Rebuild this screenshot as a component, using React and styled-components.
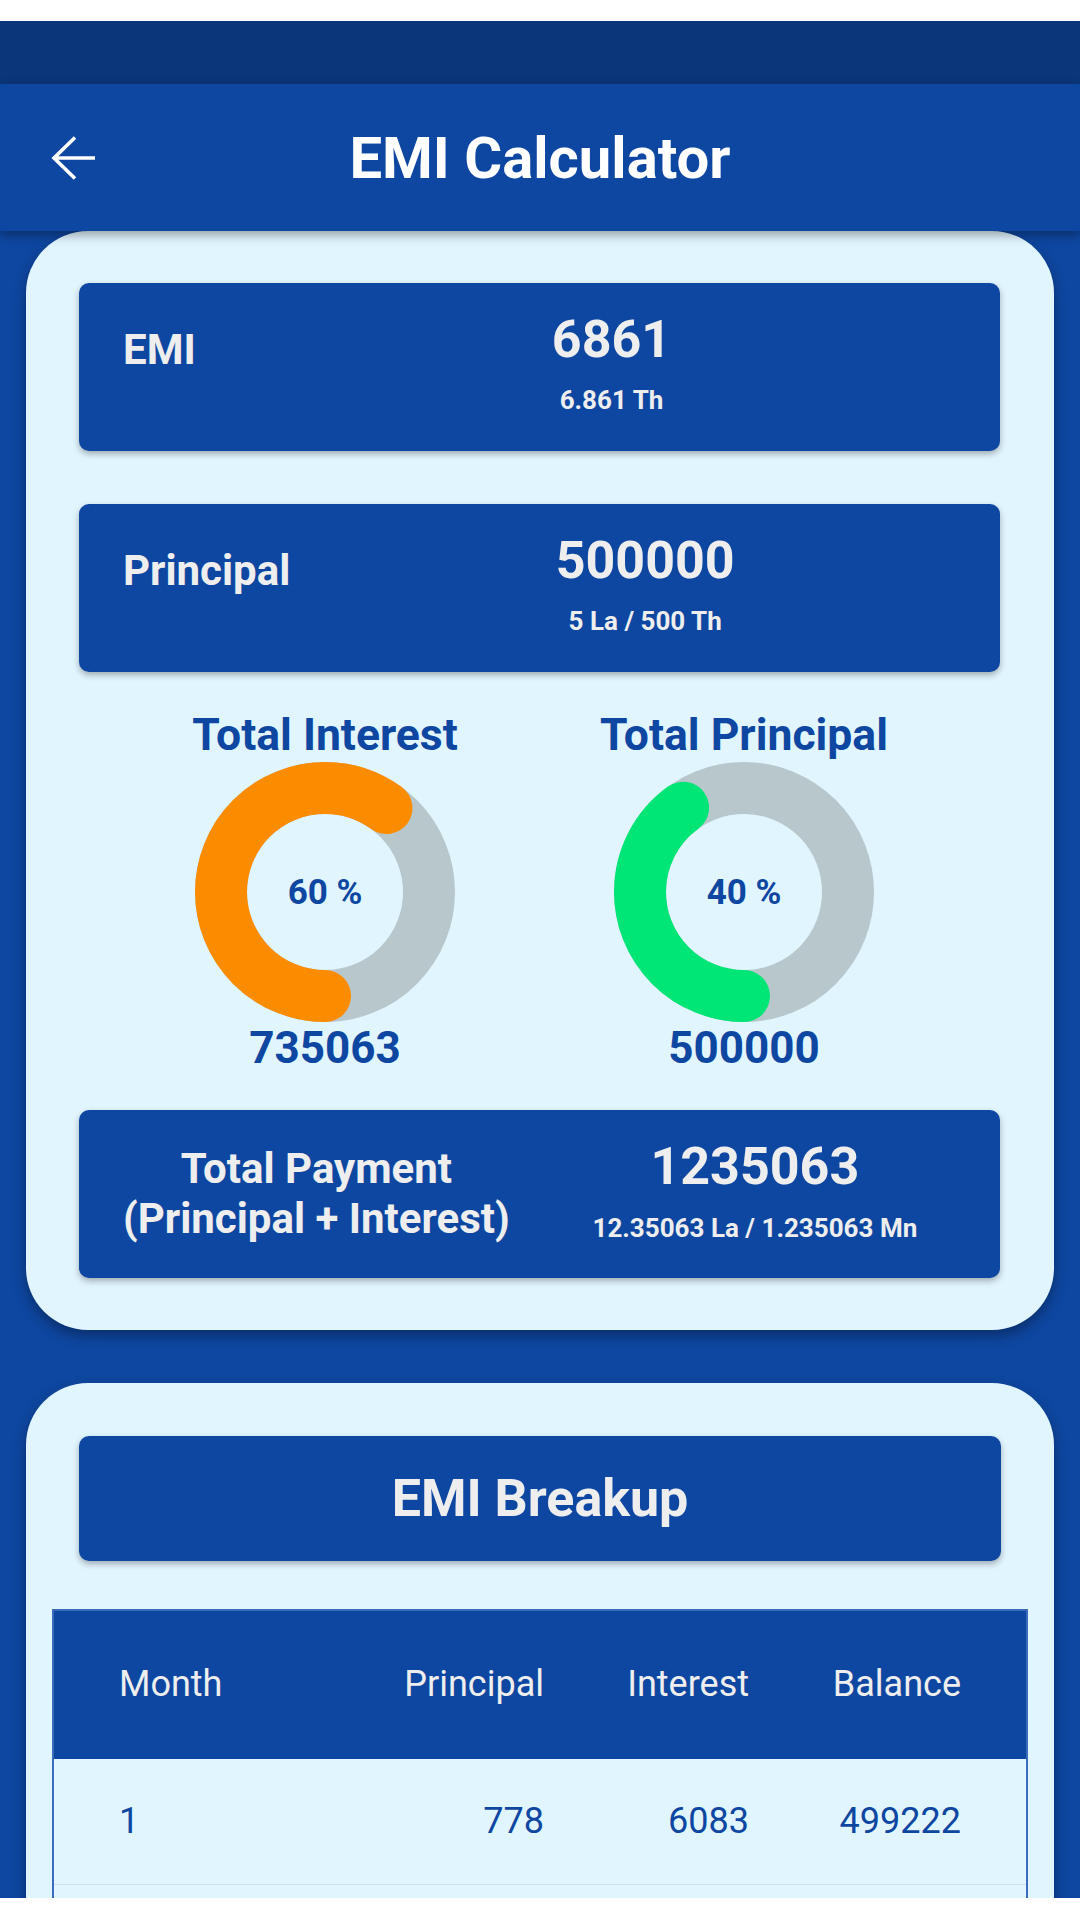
import React from "react";
import styled, { createGlobalStyle } from "styled-components";

const GlobalStyle = createGlobalStyle`
  html, body { margin: 0; padding: 0; }
  body { font-family: Roboto, "Noto Sans", "Liberation Sans", sans-serif; background: #ffffff; }
  * { box-sizing: border-box; }
`;

const BLUE = "#0e47a1";
const TEXT_BLUE = "#0d47a1";
const LIGHT = "#e1f5fe";
const SOFT_WHITE = "#eeeeee";

const Screen = styled.div`
  width: 1080px;
  height: 1920px;
  display: flex;
  flex-direction: column;
  overflow: hidden;
  background: ${BLUE};
`;

const TopStrip = styled.div`
  height: 21px;
  flex-shrink: 0;
  background: #ffffff;
`;

const StatusBar = styled.div`
  height: 63px;
  flex-shrink: 0;
  background: #0b3679;
`;

const AppBar = styled.header`
  height: 147px;
  flex-shrink: 0;
  display: grid;
  grid-template-columns: 1fr auto 1fr;
  align-items: center;
  background: ${BLUE};
  position: relative;
  z-index: 2;
  box-shadow: 0 4px 10px rgba(0, 0, 0, 0.35);
`;

const BackButton = styled.button`
  justify-self: start;
  margin-left: 51px;
  padding: 0;
  border: none;
  background: transparent;
  display: flex;
  align-items: center;
  cursor: pointer;
`;

const Title = styled.h1`
  margin: 0;
  font-size: 58px;
  font-weight: 700;
  line-height: 1;
  color: #ffffff;
  letter-spacing: 0;
`;

const Content = styled.main`
  flex: 1;
  overflow: hidden;
  padding: 0 26px;
  display: flex;
  flex-direction: column;
  gap: 53px;
`;

const BottomBar = styled.div`
  height: 22px;
  flex-shrink: 0;
  background: #ffffff;
`;

const Card = styled.section`
  flex-shrink: 0;
  background: ${LIGHT};
  border-radius: 62px;
  padding: ${(p) => p.$pad};
  display: flex;
  flex-direction: column;
  box-shadow: 0 6px 14px rgba(0, 0, 0, 0.35);
`;

const StatBox = styled.div`
  height: 168px;
  flex-shrink: 0;
  display: flex;
  align-items: flex-start;
  padding: 26px 0 0 44px;
  margin-bottom: ${(p) => p.$space || 0}px;
  background: ${BLUE};
  border-radius: 10px;
  box-shadow: 0 3px 6px rgba(0, 0, 0, 0.3);
  color: ${SOFT_WHITE};
`;

const StatLabel = styled.div`
  min-width: 100px;
  margin-top: ${(p) => p.$offset}px;
  font-size: 42px;
  font-weight: 700;
  line-height: 50px;
  text-align: ${(p) => (p.$center ? "center" : "left")};
  white-space: pre-line;
`;

const ValueCol = styled.div`
  flex: 1;
  display: flex;
  flex-direction: column;
  align-items: center;
`;

const MainValue = styled.div`
  font-size: 52px;
  font-weight: 700;
  line-height: 1.2;
`;

const SubValue = styled.div`
  margin-top: 14px;
  font-size: 26px;
  font-weight: 700;
  line-height: 1.2;
`;

const ChartRow = styled.div`
  display: flex;
  justify-content: center;
  gap: 119px;
  padding-right: 10px;
  margin: 37px 0 35px;
`;

const ChartCol = styled.div`
  width: 300px;
  display: flex;
  flex-direction: column;
  align-items: center;
  color: ${TEXT_BLUE};
`;

const ChartTitle = styled.div`
  font-size: 44.5px;
  font-weight: 700;
  line-height: 1.2;
  white-space: nowrap;
`;

const Donut = styled.div`
  width: 260px;
  height: 260px;
  display: grid;
  place-items: center;
  & > * {
    grid-area: 1 / 1;
  }
`;

const Percent = styled.div`
  font-size: 35px;
  font-weight: 700;
  line-height: 1;
`;

const ChartValue = styled.div`
  font-size: 44px;
  font-weight: 700;
  line-height: 1.2;
`;

const BreakupHeader = styled.div`
  height: 125px;
  margin: 0 27px;
  display: flex;
  align-items: center;
  justify-content: center;
  background: ${BLUE};
  border-radius: 10px;
  box-shadow: 0 3px 6px rgba(0, 0, 0, 0.3);
  color: ${SOFT_WHITE};
  font-size: 52px;
  font-weight: 700;
`;

const Table = styled.div`
  margin-top: 48px;
  border: 2px solid #3a6cbb;
  border-bottom: none;
`;

const Row = styled.div`
  display: grid;
  grid-template-columns: 284px 141px 205px 212px;
  padding: 0 65px;
  align-items: center;
  height: ${(p) => (p.$head ? 148 : 126)}px;
  background: ${(p) => (p.$head ? BLUE : LIGHT)};
  color: ${(p) => (p.$head ? SOFT_WHITE : TEXT_BLUE)};
  border-bottom: 1px solid ${(p) => (p.$head ? BLUE : "#cfe0ea")};
  font-size: 36px;
  font-weight: 400;
  line-height: 1.2;
`;

const Cell = styled.div`
  text-align: ${(p) => (p.$num ? "right" : "left")};
  white-space: nowrap;
`;

function BackArrow() {
  return (
    <svg width="46" height="46" viewBox="0 0 46 46" fill="none">
      <path
        d="M3 23 H44 M24 2.5 L3 23 L24 43.5"
        stroke="#ffffff"
        strokeWidth="3.6"
        strokeLinejoin="miter"
      />
    </svg>
  );
}

function Ring({ percent, color }) {
  const r = 104;
  const c = 2 * Math.PI * r;
  const len = (percent / 100) * c;
  return (
    <svg width="260" height="260" viewBox="0 0 260 260">
      <circle cx="130" cy="130" r={r} fill="none" stroke="#b8c7cc" strokeWidth="52" />
      <circle
        cx="130"
        cy="130"
        r={r}
        fill="none"
        stroke={color}
        strokeWidth="52"
        strokeLinecap="round"
        strokeDasharray={`${len} ${c}`}
        transform="rotate(90 130 130)"
      />
    </svg>
  );
}

function Stat({ label, value, sub, offset = 16, space, center }) {
  return (
    <StatBox $space={space}>
      <StatLabel $offset={offset} $center={center}>
        {label}
      </StatLabel>
      <ValueCol>
        <MainValue>{value}</MainValue>
        <SubValue>{sub}</SubValue>
      </ValueCol>
    </StatBox>
  );
}

function Chart({ title, percent, color, value }) {
  return (
    <ChartCol>
      <ChartTitle>{title}</ChartTitle>
      <Donut>
        <Ring percent={percent} color={color} />
        <Percent>{percent} %</Percent>
      </Donut>
      <ChartValue>{value}</ChartValue>
    </ChartCol>
  );
}

function buildSchedule(principal, annualRate, emi, count) {
  const r = annualRate / 12 / 100;
  const out = [];
  let balance = principal;
  for (let m = 1; m <= count; m++) {
    const interest = balance * r;
    const princ = emi - interest;
    balance -= princ;
    out.push({
      month: m,
      principal: Math.round(princ),
      interest: Math.round(interest),
      balance: Math.round(balance),
    });
  }
  return out;
}

const rows = buildSchedule(500000, 14.6, 6861, 3);

export default function App() {
  return (
    <>
      <GlobalStyle />
      <Screen>
        <TopStrip />
        <StatusBar />
        <AppBar>
          <BackButton aria-label="Back">
            <BackArrow />
          </BackButton>
          <Title>EMI Calculator</Title>
          <span />
        </AppBar>
        <Content>
          <Card $pad="52px 54px 52px 53px">
            <Stat label="EMI" value="6861" sub="6.861 Th" space={53} />
            <Stat label="Principal" value="500000" sub="5 La / 500 Th" />
            <ChartRow>
              <Chart title="Total Interest" percent={60} color="#fb8c00" value="735063" />
              <Chart title="Total Principal" percent={40} color="#00e676" value="500000" />
            </ChartRow>
            <Stat
              label={"Total Payment\n(Principal + Interest)"}
              value="1235063"
              sub="12.35063 La / 1.235063 Mn"
              offset={8}
              center
            />
          </Card>
          <Card $pad="53px 26px 0">
            <BreakupHeader>EMI Breakup</BreakupHeader>
            <Table>
              <Row $head>
                <Cell>Month</Cell>
                <Cell $num>Principal</Cell>
                <Cell $num>Interest</Cell>
                <Cell $num>Balance</Cell>
              </Row>
              {rows.map((r) => (
                <Row key={r.month}>
                  <Cell>{r.month}</Cell>
                  <Cell $num>{r.principal}</Cell>
                  <Cell $num>{r.interest}</Cell>
                  <Cell $num>{r.balance}</Cell>
                </Row>
              ))}
            </Table>
          </Card>
        </Content>
        <BottomBar />
      </Screen>
    </>
  );
}
